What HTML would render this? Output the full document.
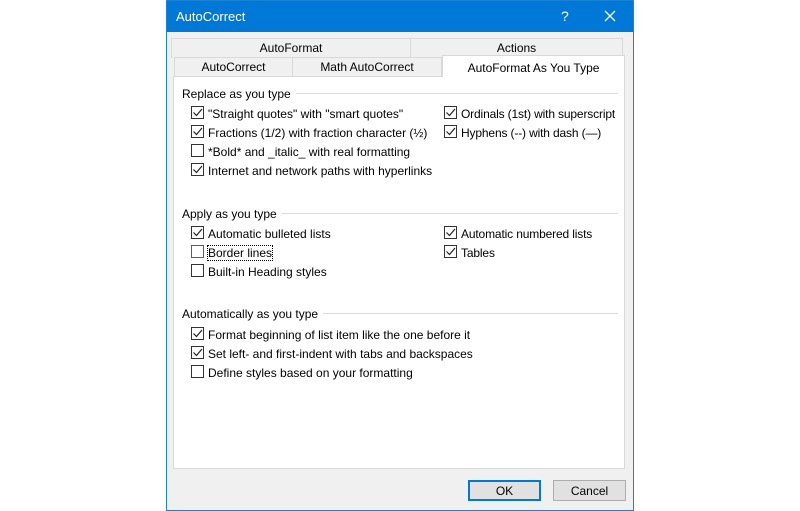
<!DOCTYPE html>
<html><head><style>
body{margin:0;width:800px;height:511px;background:#fff;position:relative;overflow:hidden;font-family:"Liberation Sans",sans-serif;font-size:12px;color:#000}
.a{position:absolute}
#dlg{left:166px;top:0;width:466px;height:509px;border:1px solid #1883d7;background:#f0f0f0}
#tb{left:0;top:0;width:466px;height:31px;background:#0078d7;color:#fff}
.tab{position:absolute;border:1px solid #d9d9d9;border-bottom:none;background:#f0f0f0;text-align:center;line-height:19px;box-sizing:border-box}
#panel{left:173px;top:76px;width:452px;height:393px;background:#fff;border:1px solid #d9d9d9;box-sizing:border-box}
.cb{position:absolute;width:13px;height:13px;border:1px solid #333;box-sizing:border-box;background:#fff}
.cb svg{position:absolute;left:0;top:0}
.t{position:absolute;white-space:nowrap;line-height:14px}
.h{position:absolute;white-space:nowrap;line-height:14px;background:#fff;padding-right:5px;z-index:2}
.ln{position:absolute;height:1px;background:#dcdcdc}
.btn{position:absolute;width:73px;height:21px;box-sizing:border-box;border:1px solid #adadad;background:#e1e1e1;text-align:center;line-height:19px}
</style></head><body>
<div id="dlg" class="a">
 <div id="tb" class="a">
  <div class="a" style="left:9px;top:8px;font-size:13px">AutoCorrect</div>
  <div class="a" style="left:394px;top:7px;font-size:14px">?</div>
  <svg class="a" style="left:437px;top:9px" width="12" height="12"><path d="M1 1L11 11M11 1L1 11" stroke="#fff" stroke-width="1.3"/></svg>
 </div>
</div>
<div class="tab" style="left:171px;top:38px;width:240px;height:20px">AutoFormat</div>
<div class="tab" style="left:410px;top:38px;width:213px;height:20px">Actions</div>
<div class="tab" style="left:174px;top:57px;width:119px;height:20px">AutoCorrect</div>
<div class="tab" style="left:292px;top:57px;width:150px;height:20px">Math AutoCorrect</div>
<div id="panel" class="a"></div>
<div class="tab" style="left:442px;top:55px;width:183px;height:22px;background:#fff;line-height:24px;z-index:2">AutoFormat As You Type</div>

<div class="h" style="left:182px;top:87px">Replace as you type</div><div class="ln" style="left:182px;top:93px;width:436px"></div>
<div class="h" style="left:182px;top:207px">Apply as you type</div><div class="ln" style="left:182px;top:213px;width:436px"></div>
<div class="h" style="left:182px;top:307px">Automatically as you type</div><div class="ln" style="left:182px;top:313px;width:436px"></div>

<div id="items"></div>
<script>
var items=[
[191,113,1,"\"Straight quotes\" with \"smart quotes\""],
[191,132,1,"Fractions (1/2) with fraction character (½)"],
[191,151,0,"*Bold* and _italic_ with real formatting"],
[191,170,1,"Internet and network paths with hyperlinks"],
[444,113,1,"Ordinals (1st) with superscript"],
[444,132,1,"Hyphens (--) with dash (—)"],
[191,233,1,"Automatic bulleted lists"],
[191,252,2,"Border lines"],
[191,271,0,"Built-in Heading styles"],
[444,233,1,"Automatic numbered lists"],
[444,252,1,"Tables"],
[191,334,1,"Format beginning of list item like the one before it"],
[191,353,1,"Set left- and first-indent with tabs and backspaces"],
[191,372,0,"Define styles based on your formatting"]];
var h="";
items.forEach(function(i){
 var b=i[2]==2?"border-color:#0078d7":"";
 h+='<div class="cb" style="left:'+i[0]+'px;top:'+(i[1]-7)+'px;'+b+'">'+(i[2]==1?'<svg width="11" height="11"><path d="M1.5 5.5L4.5 8.5L10 2" fill="none" stroke="#222" stroke-width="1.2"/></svg>':'')+'</div>';
 var s=i[2]==2?"outline:1px dotted #000;":"";
 var ls=i[0]>400?"letter-spacing:-0.15px;":"";
 h+='<div class="t" style="left:'+(i[0]+17)+'px;top:'+(i[1]-6)+'px;'+s+ls+'">'+i[3].replace(/</g,"&lt;")+'</div>';
});
document.getElementById("items").innerHTML=h;
</script>
<div class="btn" style="left:468px;top:480px;border:2px solid #0078d7;line-height:18px">OK</div>
<div class="btn" style="left:553px;top:480px;line-height:20px">Cancel</div>
</body></html>
